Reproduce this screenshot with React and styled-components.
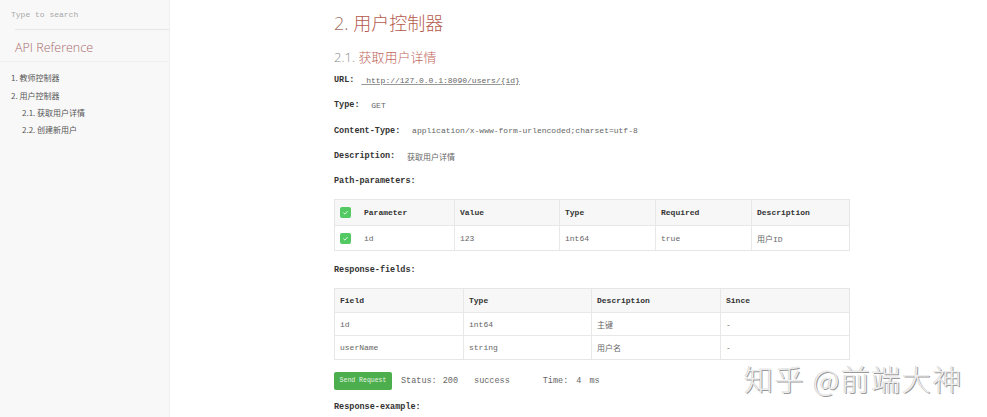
import React from 'react';
import styled, { createGlobalStyle } from 'styled-components';

const GlobalStyle = createGlobalStyle`
  html, body {
    margin: 0;
    padding: 0;
    background: #fff;
    overflow: hidden;
  }
  body {
    font-family: "Liberation Mono", "Noto Sans CJK SC", monospace;
  }
`;

const Page = styled.div`
  display: flex;
  width: 987px;
  height: 417px;
  position: relative;
  overflow: hidden;
`;

const Sidebar = styled.aside`
  width: 170px;
  flex-shrink: 0;
  background: #f8f8f8;
  border-right: 1px solid #f0f0f0;
  box-sizing: border-box;
`;

const Search = styled.div`
  height: 30px;
  box-sizing: border-box;
  padding: 10px 0 0 11px;
  font-size: 8px;
  color: #a8a8a8;
  position: relative;

  &::after {
    content: '';
    position: absolute;
    left: 15px;
    right: 0;
    bottom: 0;
    border-bottom: 1px solid #e6e6e6;
  }
`;

const Brand = styled.div`
  height: 32px;
  display: flex;
  align-items: center;
  padding: 3px 0 0 15px;
  font-family: "Open Sans", "Noto Sans", sans-serif;
  font-weight: 300;
  font-size: 12.5px;
  color: #a86c6c;
  border-bottom: 1px solid #efefef;
  box-sizing: border-box;
`;

const Nav = styled.ul`
  list-style: none;
  margin: 0;
  padding: 7px 0 0 0;
`;

const NavItem = styled.li`
  font-family: "Noto Sans CJK SC", "Open Sans", sans-serif;
  font-size: 8px;
  color: #555;
  height: ${p => (p.$sub ? 16.5 : 18)}px;
  line-height: ${p => (p.$sub ? 16.5 : 18)}px;
  padding-left: ${p => (p.$sub ? 22 : 11)}px;
`;

const Main = styled.main`
  flex: 1;
  padding-left: 164px;
  padding-top: 7px;
`;

const Content = styled.div`
  width: 516px;
`;

const H1 = styled.h1`
  margin: 0;
  font-family: "Open Sans", "Noto Sans CJK SC", sans-serif;
  font-weight: 300;
  font-size: 18px;
  line-height: 32px;
  color: #b5594c;
  & span {
    color: #a36b62;
  }
`;

const H2 = styled.h2`
  margin: 0;
  margin-top: 7.5px;
  font-family: "Open Sans", "Noto Sans CJK SC", sans-serif;
  font-weight: 300;
  font-size: 13px;
  line-height: 21px;
  color: #c0675d;
  & span {
    color: #8e8e8e;
  }
`;

const Field = styled.div`
  height: 25.3px;
  display: flex;
  align-items: center;
  font-size: 8px;
  color: #666;
  white-space: pre;
  margin-top: ${p => p.$mt || 0}px;
`;

const Label = styled.b`
  font-weight: bold;
  color: #333;
  font-size: 8.5px;
  margin-right: 7px;
`;

const Link = styled.a`
  color: #666;
  text-decoration: underline;
  text-decoration-color: #999;
`;

const Table = styled.div`
  border: 1px solid #e6e6e6;
  margin: 5px 0 ${p => p.$mb}px 0;
`;

const Row = styled.div`
  display: grid;
  grid-template-columns: ${p => p.$cols};
  height: ${p => p.$h}px;
  background: ${p => (p.$head ? '#f7f7f7' : '#fff')};
  border-top: ${p => (p.$first ? 'none' : '1px solid #e8e8e8')};
`;

const Cell = styled.div`
  display: flex;
  align-items: center;
  gap: 13px;
  padding-left: 5px;
  font-size: 8px;
  color: ${p => (p.$head ? '#333' : '#666')};
  font-weight: ${p => (p.$head ? 'bold' : 'normal')};
  border-left: ${p => (p.$first ? 'none' : '1px solid #e8e8e8')};
`;

const Check = styled.span`
  width: 11px;
  height: 11px;
  border-radius: 2px;
  background: #52c962;
  display: inline-flex;
  align-items: center;
  justify-content: center;
  flex-shrink: 0;
`;

const Actions = styled.div`
  display: flex;
  align-items: center;
  height: 18px;
  margin-top: 12px;
  font-size: 8.5px;
  color: #666;
`;

const Stat = styled.span`
  margin-left: ${p => p.$gap}px;
`;

const SendButton = styled.button`
  width: 58px;
  height: 18px;
  padding: 0;
  border: none;
  border-radius: 2px;
  background: #4cae4c;
  color: #e6f4e6;
  font-family: "Liberation Mono", monospace;
  font-size: 6.5px;
`;

const Watermark = styled.div`
  position: absolute;
  left: 744px;
  top: 357px;
  font-family: "Noto Sans CJK SC", sans-serif;
  font-size: 29px;
  font-weight: 300;
  color: #ededed;
  text-shadow: 1px 1px 0 #9a9a9a, -0.5px -0.5px 0 #d0d0d0;
  letter-spacing: 1.5px;
  white-space: pre;
`;

const CheckIcon = () => (
  <Check>
    <svg width="7" height="7" viewBox="0 0 10 10">
      <path d="M2 5.2 L4.2 7.3 L8 3" fill="none" stroke="#e9fbe9" strokeWidth="1.3" />
    </svg>
  </Check>
);

const paramCols = '119px 105px 96px 96px 1fr';
const fieldCols = '128px 128px 129px 1fr';

export default function App() {
  return (
    <Page>
      <GlobalStyle />
      <Sidebar>
        <Search>Type to search</Search>
        <Brand>API Reference</Brand>
        <Nav>
          <NavItem>1. 教师控制器</NavItem>
          <NavItem>2. 用户控制器</NavItem>
          <NavItem $sub>2.1. 获取用户详情</NavItem>
          <NavItem $sub>2.2. 创建新用户</NavItem>
        </Nav>
      </Sidebar>
      <Main>
        <Content>
          <H1><span>2.</span> 用户控制器</H1>
          <H2><span>2.1.</span> 获取用户详情</H2>
          <Field><Label>URL:</Label><Link> http://127.0.0.1:8090/users/{'{id}'}</Link></Field>
          <Field><Label>Type:</Label> GET</Field>
          <Field><Label>Content-Type:</Label> application/x-www-form-urlencoded;charset=utf-8</Field>
          <Field><Label>Description:</Label> 获取用户详情</Field>
          <Field><Label>Path-parameters:</Label></Field>
          <Table $mb={6}>
            <Row $cols={paramCols} $h={25} $head $first>
              <Cell $head $first><CheckIcon />Parameter</Cell>
              <Cell $head>Value</Cell>
              <Cell $head>Type</Cell>
              <Cell $head>Required</Cell>
              <Cell $head>Description</Cell>
            </Row>
            <Row $cols={paramCols} $h={24.5}>
              <Cell $first><CheckIcon />id</Cell>
              <Cell>123</Cell>
              <Cell>int64</Cell>
              <Cell>true</Cell>
              <Cell>用户ID</Cell>
            </Row>
          </Table>
          <Field><Label>Response-fields:</Label></Field>
          <Table $mb={0}>
            <Row $cols={fieldCols} $h={23} $head $first>
              <Cell $head $first>Field</Cell>
              <Cell $head>Type</Cell>
              <Cell $head>Description</Cell>
              <Cell $head>Since</Cell>
            </Row>
            <Row $cols={fieldCols} $h={22.5}>
              <Cell $first>id</Cell>
              <Cell>int64</Cell>
              <Cell>主键</Cell>
              <Cell>-</Cell>
            </Row>
            <Row $cols={fieldCols} $h={22.5}>
              <Cell $first>userName</Cell>
              <Cell>string</Cell>
              <Cell>用户名</Cell>
              <Cell>-</Cell>
            </Row>
          </Table>
          <Actions>
            <SendButton>Send Request</SendButton>
            <Stat $gap={9}>Status:</Stat>
            <Stat $gap={6}>200</Stat>
            <Stat $gap={16}>success</Stat>
            <Stat $gap={33}>Time:</Stat>
            <Stat $gap={8}>4</Stat>
            <Stat $gap={8}>ms</Stat>
          </Actions>
          <Field $mt={5}><Label>Response-example:</Label></Field>
        </Content>
      </Main>
      <Watermark>知乎 @前端大神</Watermark>
    </Page>
  );
}
